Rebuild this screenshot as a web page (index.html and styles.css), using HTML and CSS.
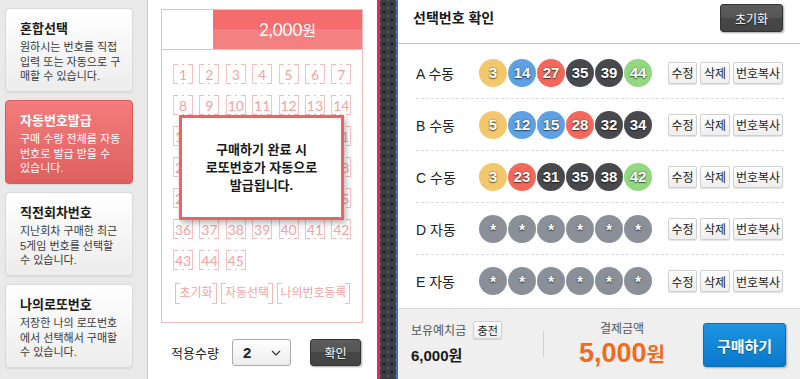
FILE: index.html
```html
<!DOCTYPE html>
<html lang="ko">
<head>
    <meta charset="UTF-8">
    <meta name="viewport" content="width=device-width, initial-scale=1.0">
    <title>로또 구매</title>
    <link rel="stylesheet" href="styles.css">
</head>
<body>
    <aside class="side">
        <div class="card">
            <h3>혼합선택</h3>
            <p>원하시는 번호를 직접<br>입력 또는 자동으로 구<br>매할 수 있습니다.</p>
        </div>
        <div class="card active">
            <h3>자동번호발급</h3>
            <p>구매 수량 전체를 자동<br>번호로 발급 받을 수<br>있습니다.</p>
        </div>
        <div class="card">
            <h3>직전회차번호</h3>
            <p>지난회차 구매한 최근<br>5게임 번호를 선택할<br>수 있습니다.</p>
        </div>
        <div class="card">
            <h3>나의로또번호</h3>
            <p>저장한 나의 로또번호<br>에서 선택해서 구매할<br>수 있습니다.</p>
        </div>
    </aside>

    <section class="picker">
        <div class="slip">
            <div class="slip-head">
                <div class="slip-blank"></div>
                <div class="slip-price">2,000<span>원</span></div>
            </div>
            <div class="nums" id="nums"></div>
            <div class="slip-btns">
                <span class="bracket w42">초기화</span>
                <span class="bracket w52">자동선택</span>
                <span class="bracket w73">나의번호등록</span>
            </div>
        </div>
        <div class="qty">
            <span class="qty-label">적용수량</span>
            <div class="select">
                <b>2</b>
                <svg width="10" height="6" viewBox="0 0 10 6"><path d="M1 1l4 4 4-4" fill="none" stroke="#333" stroke-width="1.2"/></svg>
            </div>
            <button class="btn-dark btn-ok">확인</button>
        </div>
        <div class="notice">
            구매하기 완료 시<br>로또번호가 자동으로<br>발급됩니다.
        </div>
    </section>

    <div class="divider"></div>

    <section class="result">
        <div class="result-head">
            <h2>선택번호 확인</h2>
            <button class="btn-dark btn-reset">초기화</button>
        </div>
        <div class="rows">
            <div class="row">
                <span class="label">A 수동</span>
                <div class="balls">
                    <span class="ball y">3</span><span class="ball b">14</span><span class="ball r">27</span><span class="ball k">35</span><span class="ball k">39</span><span class="ball g">44</span>
                </div>
                <div class="acts"><button class="mini w29">수정</button><button class="mini w30">삭제</button><button class="mini w50">번호복사</button></div>
            </div>
            <div class="row">
                <span class="label">B 수동</span>
                <div class="balls">
                    <span class="ball y">5</span><span class="ball b">12</span><span class="ball b">15</span><span class="ball r">28</span><span class="ball k">32</span><span class="ball k">34</span>
                </div>
                <div class="acts"><button class="mini w29">수정</button><button class="mini w30">삭제</button><button class="mini w50">번호복사</button></div>
            </div>
            <div class="row">
                <span class="label">C 수동</span>
                <div class="balls">
                    <span class="ball y">3</span><span class="ball r">23</span><span class="ball k">31</span><span class="ball k">35</span><span class="ball k">38</span><span class="ball g">42</span>
                </div>
                <div class="acts"><button class="mini w29">수정</button><button class="mini w30">삭제</button><button class="mini w50">번호복사</button></div>
            </div>
            <div class="row">
                <span class="label">D 자동</span>
                <div class="balls">
                    <span class="ball s">*</span><span class="ball s">*</span><span class="ball s">*</span><span class="ball s">*</span><span class="ball s">*</span><span class="ball s">*</span>
                </div>
                <div class="acts"><button class="mini w29">수정</button><button class="mini w30">삭제</button><button class="mini w50">번호복사</button></div>
            </div>
            <div class="row">
                <span class="label">E 자동</span>
                <div class="balls">
                    <span class="ball s">*</span><span class="ball s">*</span><span class="ball s">*</span><span class="ball s">*</span><span class="ball s">*</span><span class="ball s">*</span>
                </div>
                <div class="acts"><button class="mini w29">수정</button><button class="mini w30">삭제</button><button class="mini w50">번호복사</button></div>
            </div>
        </div>
        <div class="pay">
            <div class="deposit">
                <div class="deposit-top">보유예치금 <button class="mini charge">충전</button></div>
                <div class="deposit-amt">6,000원</div>
            </div>
            <div class="vline"></div>
            <div class="total">
                <div class="total-label">결제금액</div>
                <div class="total-amt">5,000<span>원</span></div>
            </div>
            <button class="buy">구매하기</button>
        </div>
    </section>

    <script>
        // 1~45 번호판 채우기
        const nums = document.getElementById('nums');
        for (let i = 1; i <= 45; i++) {
            const cell = document.createElement('span');
            cell.className = 'num';
            cell.textContent = i;
            nums.appendChild(cell);
        }
    </script>
</body>
</html>
```

FILE: styles.css
```css
body {
    margin: 0;
    width: 800px;
    height: 379px;
    overflow: hidden;
    display: flex;
    font-family: "Liberation Sans", "Noto Sans CJK KR", sans-serif;
    color: #222;
    background-color: #fff;
}
button {
    font-family: inherit;
    cursor: pointer;
}

/* 왼쪽 메뉴 */
.side {
    width: 142px;
    padding: 8px 0 0 5px;
    background-color: #e9e9e9;
    border-right: 1px solid #c9c9c9;
    display: flex;
    flex-direction: column;
    gap: 8px;
}
.card {
    width: 126px;
    height: 82px;
    border: 1px solid #d9d9d9;
    border-radius: 4px;
    background: linear-gradient(#ffffff, #ececec);
    box-shadow: 0 1px 1px rgba(0, 0, 0, 0.08);
    box-sizing: content-box;
}
.card h3 {
    margin: 11px 0 0 14px;
    font-size: 13px;
    line-height: 17px;
    font-weight: bold;
    color: #1a1a1a;
}
.card p {
    margin: 3px 0 0 14px;
    font-size: 11px;
    line-height: 14.5px;
    color: #3a3a3a;
}
.card.active {
    border-color: #d85a5a;
    background: linear-gradient(#f47c7c, #df5f5f);
}
.card.active h3,
.card.active p {
    color: #fff;
}

/* 가운데 번호 선택 */
.picker {
    position: relative;
    width: 216px;
    padding: 9px 0 0 13px;
    background-color: #fff;
}
.slip {
    width: 200px;
    border: 1px solid #f6b9b9;
    padding-bottom: 18px;
}
.slip-head {
    display: flex;
    height: 39px;
    border-bottom: 1px solid #f6b9b9;
}
.slip-blank {
    width: 51px;
}
.slip-price {
    flex: 1;
    background: linear-gradient(#f46c6c 0, #f46c6c 50%, #f48181 50%, #f48181 100%);
    color: #fff;
    text-align: center;
    font-family: "Lato", "Noto Sans CJK KR", sans-serif;
    font-size: 17px;
    line-height: 39px;
}
.slip-price span {
    font-family: "Noto Sans CJK KR", sans-serif;
    font-size: 15px;
}
.nums {
    display: grid;
    grid-template-columns: repeat(7, 20px);
    column-gap: 6.4px;
    row-gap: 11px;
    padding: 14px 0 0 11px;
}
.num {
    height: 20px;
    border-left: 1px solid #f6c3c3;
    border-right: 1px solid #f6c3c3;
    background:
        linear-gradient(#f6b9b9, #f6b9b9) left top / 4px 1px no-repeat,
        linear-gradient(#f6b9b9, #f6b9b9) center top / 2px 1px no-repeat,
        linear-gradient(#f6b9b9, #f6b9b9) right top / 4px 1px no-repeat,
        linear-gradient(#f6b9b9, #f6b9b9) left bottom / 4px 1px no-repeat,
        linear-gradient(#f6b9b9, #f6b9b9) center bottom / 2px 1px no-repeat,
        linear-gradient(#f6b9b9, #f6b9b9) right bottom / 4px 1px no-repeat;
    color: #f3a3a3;
    font-family: "Lato", sans-serif;
    font-size: 14px;
    line-height: 21px;
    text-align: center;
}
.slip-btns {
    display: flex;
    gap: 4px;
    padding: 13px 0 0 13px;
}
.bracket {
    height: 21px;
    border-left: 1px solid #f6b9b9;
    border-right: 1px solid #f6b9b9;
    background:
        linear-gradient(#f6b9b9, #f6b9b9) left top / 4px 1px no-repeat,
        linear-gradient(#f6b9b9, #f6b9b9) right top / 4px 1px no-repeat,
        linear-gradient(#f6b9b9, #f6b9b9) left bottom / 4px 1px no-repeat,
        linear-gradient(#f6b9b9, #f6b9b9) right bottom / 4px 1px no-repeat;
    color: #f3a3a3;
    font-size: 12px;
    line-height: 21px;
    text-align: center;
    box-sizing: content-box;
}
.w42 { width: 40px; }
.w52 { width: 50px; }
.w73 { width: 71px; }

.qty {
    display: flex;
    align-items: center;
    margin-top: 16px;
    padding-left: 10px;
}
.qty-label {
    font-size: 13px;
    color: #222;
    width: 61px;
}
.select {
    width: 59px;
    height: 27px;
    border: 1px solid #aaa;
    border-radius: 3px;
    background: linear-gradient(#fff, #ececec);
    display: flex;
    align-items: center;
    justify-content: space-between;
    padding: 0 9px 0 10px;
    box-sizing: border-box;
}
.select b {
    font-size: 15px;
}
.btn-dark {
    border: 1px solid #333;
    border-radius: 3px;
    background: linear-gradient(#5c5c5c 0, #555 50%, #474747 50%, #444 100%);
    color: #fff;
    font-size: 12px;
    text-shadow: 0 1px 1px rgba(0, 0, 0, 0.6);
    box-shadow: 1px 1px 2px rgba(0, 0, 0, 0.35);
    padding: 0;
}
.btn-ok {
    width: 51px;
    height: 27px;
    margin-left: 19px;
}
.notice {
    position: absolute;
    left: 31px;
    top: 115px;
    width: 159px;
    height: 99px;
    border: 3px solid #e96565;
    background-color: #fff;
    box-shadow: 2px 3px 6px rgba(0, 0, 0, 0.3);
    display: flex;
    align-items: center;
    justify-content: center;
    text-align: center;
    font-size: 13px;
    font-weight: bold;
    line-height: 18px;
    color: #1a1a1a;
}

/* 구분선 */
.divider {
    width: 16px;
    border-left: 3px solid #e4265e;
    border-right: 2px solid #3d6fc9;
    background-color: #3a3d42;
    background-image:
        radial-gradient(circle, #15161a 1px, transparent 1.4px),
        radial-gradient(circle, #5a5e66 0.8px, transparent 1.2px);
    background-size: 8px 8px, 8px 8px;
    background-position: 0 0, 4px 4px;
}

/* 오른쪽 선택번호 */
.result {
    width: 402px;
    display: flex;
    flex-direction: column;
}
.result-head {
    height: 43px;
    border-bottom: 1px solid #bdbdbd;
    display: flex;
    justify-content: space-between;
    align-items: flex-start;
    padding: 0 17px 0 15px;
}
.result-head h2 {
    margin: 9px 0 0;
    font-size: 14px;
    line-height: 18px;
    font-weight: bold;
    color: #1a1a1a;
}
.btn-reset {
    width: 63px;
    height: 28px;
    margin-top: 4px;
    font-size: 12px;
}
.rows {
    padding: 3px 16px 0 18px;
}
.row {
    height: 51px;
    display: flex;
    align-items: center;
    border-bottom: 1px dashed #dcdcdc;
}
.row:last-child {
    border-bottom: none;
    height: 52px;
}
.label {
    width: 63px;
    font-size: 14px;
    color: #222;
}
.balls {
    display: flex;
    gap: 1px;
}
.ball {
    width: 28px;
    height: 28px;
    border-radius: 50%;
    color: #fff;
    font-size: 15px;
    font-weight: bold;
    line-height: 28px;
    text-align: center;
    text-shadow: 0 0 2px rgba(0, 0, 0, 0.55), 0 1px 1px rgba(0, 0, 0, 0.5);
}
.ball.y { background-color: #f3c86d; }
.ball.b { background-color: #5ea0e4; }
.ball.r { background-color: #f3685b; }
.ball.k { background-color: #48494d; }
.ball.g { background-color: #93d880; }
.ball.s {
    background-color: #8b8f97;
    font-size: 16px;
    line-height: 32px;
}
.acts {
    display: flex;
    gap: 3px;
    margin-left: 16px;
}
.mini {
    height: 22px;
    border: 1px solid #cfcfcf;
    border-radius: 2px;
    background: linear-gradient(#fff, #eeeeee);
    box-shadow: 0 1px 1px rgba(0, 0, 0, 0.12);
    color: #222;
    font-size: 12px;
    padding: 0;
}
.w29 { width: 29px; }
.w30 { width: 30px; }
.w50 { width: 50px; }

.pay {
    margin-top: 1px;
    flex: 1;
    border-top: 1px solid #dcdcdc;
    background-color: #efefef;
    display: flex;
    align-items: flex-start;
}
.deposit {
    width: 132px;
    padding: 12px 0 0 13px;
}
.deposit-top {
    display: flex;
    align-items: center;
    font-size: 12px;
    color: #555;
    height: 17px;
}
.charge {
    width: 29px;
    height: 18px;
    margin-left: 7px;
    font-size: 11px;
}
.deposit-amt {
    margin-top: 8px;
    font-size: 15px;
    font-weight: bold;
    line-height: 20px;
    color: #1a1a1a;
}
.vline {
    width: 1px;
    height: 26px;
    margin-top: 22px;
    background-color: #d0d0d0;
}
.total {
    width: 156px;
    text-align: center;
    padding-top: 12px;
}
.total-label {
    font-size: 12px;
    line-height: 16px;
    color: #555;
}
.total-amt {
    font-size: 27px;
    font-weight: bold;
    line-height: 30px;
    color: #f26a1c;
    margin-top: 1px;
}
.total-amt span {
    font-family: "Noto Sans CJK KR", sans-serif;
    font-size: 20px;
}
.buy {
    width: 83px;
    height: 44px;
    margin: 14px 0 0 3px;
    border: 1px solid #0a6fb8;
    border-radius: 3px;
    background: linear-gradient(#1d93e2, #0a7acb);
    color: #fff;
    font-size: 15px;
    font-weight: bold;
    text-shadow: 0 1px 1px rgba(0, 0, 0, 0.35);
    box-shadow: 1px 1px 2px rgba(0, 0, 0, 0.3);
    padding: 0;
}
```
